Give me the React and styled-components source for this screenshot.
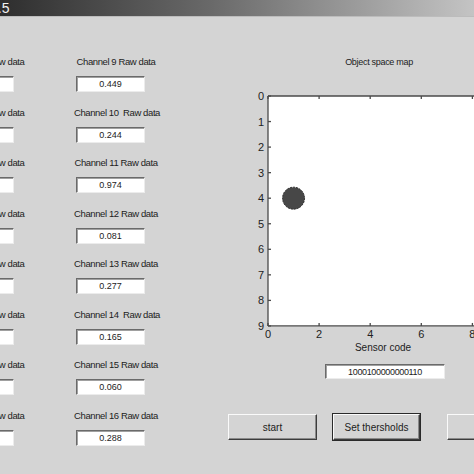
import React from "react";
import styled, { createGlobalStyle } from "styled-components";

const GlobalStyle = createGlobalStyle`
  html, body {
    margin: 0;
    padding: 0;
    overflow: hidden;
    background: #d4d4d4;
  }
  body {
    font-family: "Liberation Sans", Arial, sans-serif;
    color: #1c1c1c;
  }
`;

const Window = styled.div`
  width: 474px;
  height: 474px;
  overflow: hidden;
  background: #d4d4d4;
`;

const TitleBar = styled.div`
  height: 16px;
  display: flex;
  align-items: center;
  background: linear-gradient(to right, #2e2e2e 0%, #6a6a6a 45%, #c4c4c4 100%);
  border-bottom: 1px solid #bcbcbc;
  overflow: hidden;

  span {
    margin-left: -10px;
    font-size: 14px;
    line-height: 16px;
    color: #f2f2f2;
    white-space: nowrap;
  }
`;

const Body = styled.div`
  display: flex;
  align-items: flex-start;
`;

const ChannelArea = styled.div`
  flex-shrink: 0;
  display: grid;
  grid-template-columns: repeat(2, 84px);
  grid-template-rows: repeat(8, 36px);
  grid-auto-flow: column;
  column-gap: 47px;
  row-gap: 14.5px;
  margin-left: -57px;
  padding-top: 39px;
`;

const Cell = styled.div`
  display: flex;
  flex-direction: column;
`;

const Label = styled.div`
  height: 12px;
  line-height: 12px;
  font-size: 9.5px;
  letter-spacing: -0.4px;
  text-align: center;
  white-space: pre;
  margin-bottom: 8px;
`;

const EditBox = styled.div`
  box-sizing: border-box;
  width: ${(p) => p.$width || 69}px;
  height: ${(p) => p.$height || 16}px;
  margin-left: ${(p) => p.$indent || 2}px;
  background: #fff;
  border-top: 1px solid #6a6a6a;
  border-left: 1px solid #6a6a6a;
  border-right: 1px solid #ececec;
  border-bottom: 1px solid #ececec;
  box-shadow: inset 1px 1px 0 #a0a0a0;
  display: flex;
  align-items: center;
  justify-content: center;
  font-size: 9px;
  letter-spacing: ${(p) => p.$tight || 0}px;
  white-space: nowrap;
`;

const RightPanel = styled.div`
  flex-shrink: 0;
  width: 280px;
  margin-left: 70px;
  padding-top: 39px;
  display: flex;
  flex-direction: column;
`;

const PlotTitle = styled.div`
  margin-left: 40px;
  width: 222px;
  height: 12px;
  line-height: 12px;
  font-size: 9px;
  letter-spacing: -0.3px;
  text-align: center;
`;

const Chart = styled.svg`
  display: block;
  margin-left: 22px;
  margin-top: 21px;
  overflow: visible;
`;

const AxisLabel = styled.div`
  margin-left: 40px;
  width: 230px;
  height: 12px;
  line-height: 12px;
  margin-top: 1px;
  font-size: 10px;
  text-align: center;
`;

const CodeRow = styled.div`
  margin-top: 10px;
  margin-left: 95px;
`;

const ButtonRow = styled.div`
  display: flex;
  gap: 16px;
  margin-top: 35px;
`;

const Button = styled.button`
  flex-shrink: 0;
  box-sizing: border-box;
  width: ${(p) => p.$width}px;
  height: 26px;
  margin-left: ${(p) => p.$offset || 0}px;
  padding: 0;
  background: #d4d4d4;
  font-family: "Liberation Sans", Arial, sans-serif;
  font-size: 10px;
  color: #1c1c1c;
  border-top: 1px solid #fafafa;
  border-left: 1px solid #fafafa;
  border-right: 1px solid #3c3c3c;
  border-bottom: 1px solid #3c3c3c;
  box-shadow: ${(p) =>
    p.$default
      ? "0 0 0 1px #2a2a2a, inset -1px -1px 0 #8a8a8a"
      : "inset -1px -1px 0 #8a8a8a"};
`;

const left = ["0.512", "0.338", "0.705", "0.126", "0.419", "0.093", "0.651", "0.207"];
const right = ["0.449", "0.244", "0.974", "0.081", "0.277", "0.165", "0.060", "0.288"];

const channels = [
  ...left.map((v, i) => ({ name: `Channel ${i + 1} Raw data`, value: v })),
  ...right.map((v, i) => ({
    name: i === 1 || i === 5 ? `Channel ${i + 9}  Raw data` : `Channel ${i + 9} Raw data`,
    value: v,
  })),
];

const UNIT = 25.55;
const OX = 18;
const OY = 7;

const SpaceMap = () => {
  const w = UNIT * 10;
  const h = UNIT * 9;
  const ys = Array.from({ length: 10 }, (_, i) => i);
  const xs = [0, 2, 4, 6, 8, 10];
  return (
    <Chart width={OX + w + 4} height={252}>
      <rect x={OX} y={OY} width={w} height={h} fill="#fff" />
      <g stroke="#4a4a4a" strokeWidth="1.3">
        <line x1={OX} y1={OY} x2={OX + w} y2={OY} />
        <line x1={OX} y1={OY} x2={OX} y2={OY + h} />
        <line x1={OX} y1={OY + h} x2={OX + w} y2={OY + h} />
        {ys.map((i) => (
          <line key={`y${i}`} x1={OX} y1={OY + i * UNIT} x2={OX + 3} y2={OY + i * UNIT} />
        ))}
        {xs.map((v) => (
          <g key={`x${v}`}>
            <line x1={OX + v * UNIT} y1={OY} x2={OX + v * UNIT} y2={OY + 3} />
            <line x1={OX + v * UNIT} y1={OY + h} x2={OX + v * UNIT} y2={OY + h - 3} />
          </g>
        ))}
      </g>
      <g fill="#222" fontFamily="Liberation Sans, Arial, sans-serif" fontSize="11">
        {ys.map((i) => (
          <text key={`ly${i}`} x={14} y={OY + i * UNIT + 4} textAnchor="end">
            {i}
          </text>
        ))}
        {xs.map((v) => (
          <text key={`lx${v}`} x={OX + v * UNIT} y={249} textAnchor="middle">
            {v}
          </text>
        ))}
      </g>
      <circle
        cx={OX + UNIT}
        cy={OY + 4 * UNIT}
        r="11"
        fill="#474747"
        stroke="#2a2a2a"
        strokeWidth="1"
        strokeDasharray="2 1"
      />
    </Chart>
  );
};

export default function App() {
  return (
    <Window>
      <GlobalStyle />
      <TitleBar>
        <span>1.5</span>
      </TitleBar>
      <Body>
        <ChannelArea>
          {channels.map((c) => (
            <Cell key={c.name}>
              <Label>{c.name}</Label>
              <EditBox>{c.value}</EditBox>
            </Cell>
          ))}
        </ChannelArea>
        <RightPanel>
          <PlotTitle>Object space map</PlotTitle>
          <SpaceMap />
          <AxisLabel>Sensor code</AxisLabel>
          <CodeRow>
            <EditBox $width={120} $height={15} $indent={0} $tight={-0.35}>
              1000100000000110
            </EditBox>
          </CodeRow>
          <ButtonRow>
            <Button $width={89}>start</Button>
            <Button $width={87} $default>
              Set thersholds
            </Button>
            <Button $width={89} $offset={11}>
              stop
            </Button>
          </ButtonRow>
        </RightPanel>
      </Body>
    </Window>
  );
}
